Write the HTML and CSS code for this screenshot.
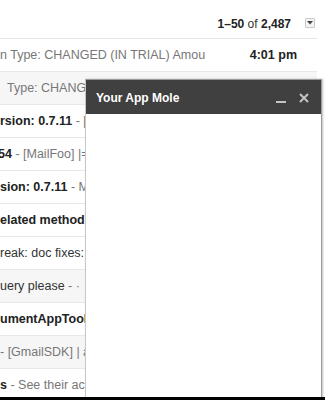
FILE: index.html
```html
<!DOCTYPE html>
<html>
<head>
<meta charset="utf-8">
<link rel="stylesheet" href="styles.css">
</head>
<body>
<div class="page">
  <div class="toolbar">
    <span class="count"><b>1–50</b> of <b>2,487</b></span>
    <span class="dd"><svg width="6" height="4" viewBox="0 0 6 4"><path d="M0 0h6L3 3.5z" fill="#444"/></svg></span>
  </div>
  <ul class="list">
    <li class="row unread"><span class="text"><span class="snip">n Type: CHANGED (IN TRIAL) Amount: $49.00</span></span><span class="time">4:01 pm</span></li>
    <li class="row read"><span class="text pad7 short"><span class="snip">Type: CHANGED</span></span></li>
    <li class="row unread"><span class="text short"><span class="subj">rsion: 0.7.11</span><span class="snip"> - [</span></span></li>
    <li class="row unread"><span class="text neg2 short"><span class="subj">54</span><span class="snip"> - [MailFoo] |=</span></span></li>
    <li class="row unread"><span class="text short"><span class="subj">sion: 0.7.11</span><span class="snip"> - M</span></span></li>
    <li class="row unread"><span class="text short"><span class="subj">elated methods</span></span></li>
    <li class="row"><span class="text short"><span class="rsubj">reak: doc fixes:</span><span class="snip"> (</span></span></li>
    <li class="row read"><span class="text short"><span class="rsubj">uery please</span><span class="snip"> - ·</span></span></li>
    <li class="row unread"><span class="text short"><span class="subj">umentAppToolbar</span></span></li>
    <li class="row read"><span class="text short"><span class="snip">- [GmailSDK] | a</span></span></li>
    <li class="row unread"><span class="text short"><span class="subj">s</span><span class="snip"> - See their act</span></span></li>
  </ul>
</div>
<div class="mole">
  <div class="mole-head">
    <span class="mole-title">Your App Mole</span>
    <svg class="mole-btn" width="10" height="10" viewBox="0 0 10 10"><rect x="0" y="8" width="10" height="2" fill="#c4c4c4"/></svg>
    <svg class="mole-btn close" width="10" height="10" viewBox="0 0 10 10"><path d="M1 1L9 9M9 1L1 9" stroke="#c4c4c4" stroke-width="2"/></svg>
  </div>
  <div class="mole-body"></div>
</div>
<div class="bottom-bar"></div>
</body>
</html>
```

FILE: styles.css
```css
html, body {
  margin: 0;
  padding: 0;
  background: #fff;
}
body {
  width: 325px;
  height: 400px;
  overflow: hidden;
  font-family: "Liberation Sans", Arial, sans-serif;
  color: #222;
}
.page {
  width: 317px;
}
.toolbar {
  height: 38px;
  border-bottom: 1px solid #e8e8e8;
  display: flex;
  justify-content: flex-end;
  align-items: center;
  padding-right: 2px;
  font-size: 12px;
}
.count {
  color: #333;
  margin-right: 14px;
  margin-top: 9px;
  line-height: 14px;
}
.count b {
  color: #222;
}
.dd {
  width: 8px;
  height: 8px;
  border: 1px solid #c8c8c8;
  border-radius: 1px;
  background: #f4f4f4;
  display: flex;
  align-items: center;
  justify-content: center;
  margin-top: 7px;
}
.list {
  list-style: none;
  margin: 0;
  padding: 0;
}
.row {
  height: 32px;
  border-bottom: 1px solid #e8e8e8;
  display: flex;
  align-items: center;
  font-size: 12.5px;
  line-height: 32px;
  padding-right: 20px;
}
.row.read {
  background: #f6f6f6;
}
.text {
  flex: 1;
  min-width: 0;
  overflow: hidden;
  white-space: nowrap;
}
.text.short {
  flex: 0 0 auto;
  max-width: 86px;
}
.pad7 {
  padding-left: 7px;
}
.neg2 {
  text-indent: -2px;
}
.snip {
  color: #777;
}
.subj {
  font-weight: bold;
  color: #222;
}
.rsubj {
  color: #333;
}
.time {
  width: 92px;
  text-align: right;
  white-space: nowrap;
  color: #222;
}
.unread .time {
  font-weight: bold;
}
.mole {
  position: absolute;
  left: 85px;
  top: 79px;
  width: 235px;
  bottom: 0;
  border: 1px solid #9a9a9a;
  border-left-color: #c8c8c8;
  border-bottom: none;
  background: #fff;
  box-shadow: 1px 0 2px rgba(0, 0, 0, 0.25);
  display: flex;
  flex-direction: column;
}
.mole-head {
  height: 34px;
  background: #404040;
  display: flex;
  align-items: center;
  padding: 0 12px 0 10px;
}
.mole-title {
  flex: 1;
  color: #fff;
  font-weight: bold;
  font-size: 12px;
  margin-top: 2px;
}
.mole-btn {
  display: block;
  margin-top: 2px;
}
.close {
  margin-left: 13px;
}
.mole-body {
  flex: 1;
}
.bottom-bar {
  position: fixed;
  left: 0;
  right: 0;
  bottom: 0;
  height: 3px;
  background: #000;
}
```
